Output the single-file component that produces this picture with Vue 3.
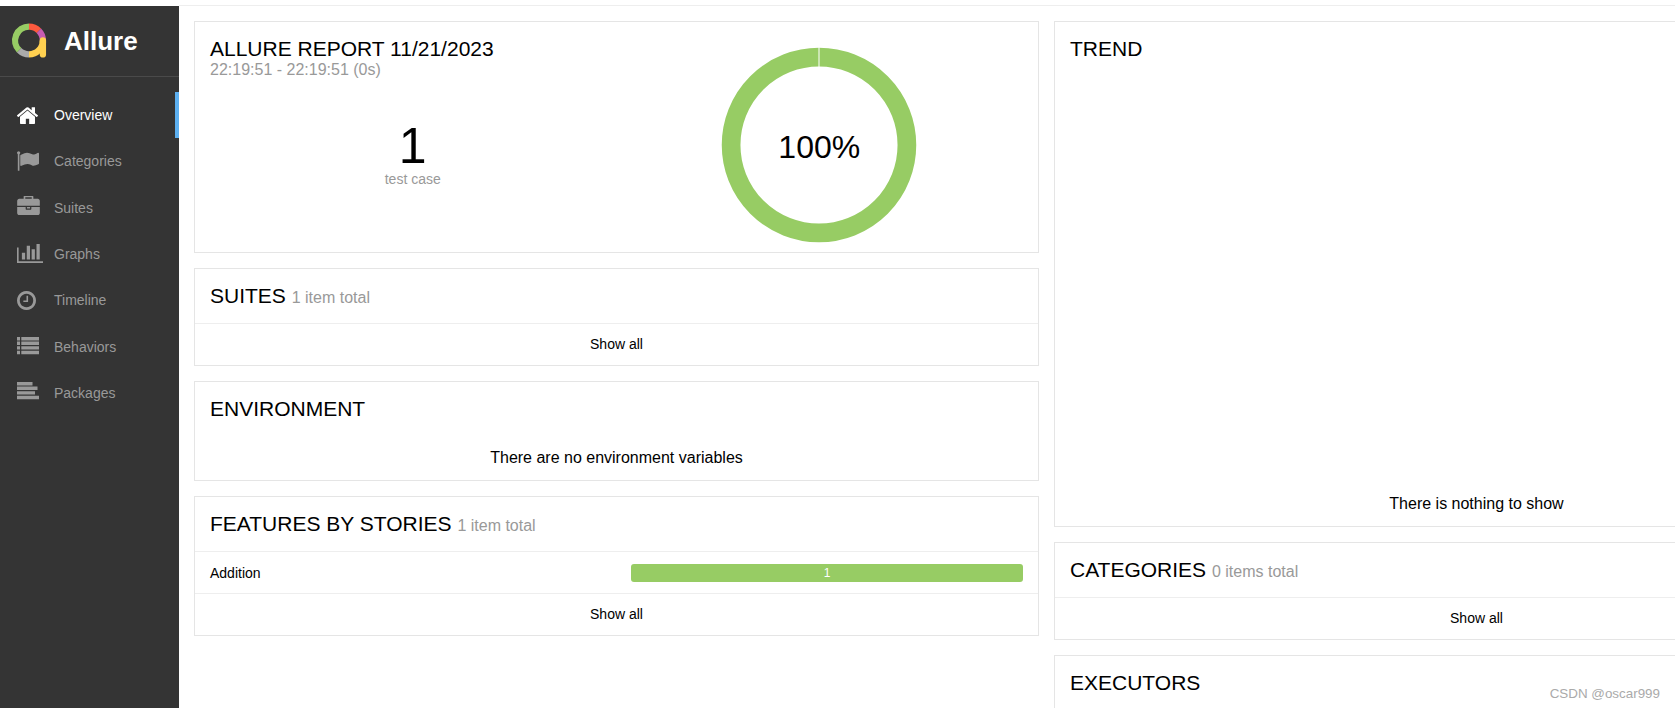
<script setup>
const nav = [
  { name: 'Overview', icon: 'home', active: true },
  { name: 'Categories', icon: 'flag' },
  { name: 'Suites', icon: 'briefcase' },
  { name: 'Graphs', icon: 'chart' },
  { name: 'Timeline', icon: 'clock' },
  { name: 'Behaviors', icon: 'list' },
  { name: 'Packages', icon: 'align' }
]
</script>

<template>
  <div class="page">
    <aside class="side">
      <div class="brand">
        <svg class="logo" width="36" height="36" viewBox="0 0 36 36">
          <g fill="none" stroke-width="6.3">
            <path d="M18 3.6 A13.9 13.900 0 0 0 8.17 27.33" stroke="#97cc64" />
            <path d="M8.17 27.33 A13.9 13.900 0 0 0 18 31.4" stroke="#aaa" />
            <path d="M18 3.6 A13.9 13.900 0 0 1 27.83 7.67" stroke="#fd5a3e" />
            <path d="M27.83 7.67 A13.9 13.900 0 0 1 31.9 17.5" stroke="#c75cb1" />
            <path d="M18 31.4 A13.9 13.900 0 0 0 31.9 17.5" stroke="#ffd050" />
            <path d="M31.9 17.5 V31.400" stroke="#ffd050" stroke-linecap="round" />
            <path d="M31.9 17.5 V20" stroke="#ffd050" />
          </g>
        </svg>
        <span class="brand-name">Allure</span>
      </div>
      <nav class="menu">
        <a v-for="n in nav" :key="n.name" class="item" :class="{ on: n.active }">
          <span class="ico" :class="'ico-' + n.icon">
            <svg v-if="n.icon === 'home'" width="21" height="17" viewBox="90 250 1612 1286"><path fill="currentColor" d="M1472 992v480q0 26-19 45t-45 19h-384v-384h-256v384h-384q-26 0-45-19t-19-45v-480q0-1 .5-3t.5-3l575-474 575 474q1 2 1 6zm223-69l-62 74q-8 9-21 11h-3q-13 0-21-7l-692-577-692 577q-12 8-24 7-13-2-21-11l-62-74q-8-10-7-23.500t11-21.500l719-599q32-26 76-26t76 26l244 204v-195q0-14 9-23t23-9h192q14 0 23 9t9 23v408l219 182q10 8 11 21.500t-7 23.500z" /></svg>
            <svg v-else-if="n.icon === 'flag'" width="22" height="20" viewBox="64 128 1728 1536"><path fill="currentColor" d="M320 256q0 72-64 110v1266q0 13-9.500 22.500t-22.500 9.500h-64q-13 0-22.500-9.500t-9.500-22.500v-1266q-64-38-64-110 0-53 37.500-90.500t90.500-37.500 90.500 37.500 37.500 90.500zm1472 64v763q0 25-12.500 38.500t-39.500 27.500q-215 116-369 116-61 0-123.500-22t-108.500-48-115.500-48-142.500-22q-192 0-464 146-17 9-33 9-26 0-45-19t-19-45v-742q0-32 31-55 21-14 79-43 236-120 421-120 107 0 200 29t219 88q38 19 88 19 54 0 117.500-21t110-47 88-47 54.500-21q26 0 45 19t19 45z" /></svg>
            <svg v-else-if="n.icon === 'briefcase'" width="23" height="19" viewBox="0 32 1792 1504"><path fill="currentColor" d="M640 256h512v-128h-512v128zm1152 640v480q0 66-47 113t-113 47h-1472q-66 0-113-47t-47-113v-480h672v160q0 26 19 45t45 19h320q26 0 45-19t19-45v-160h672zm-768 0v128h-256v-128h256zm768-480v384h-1792v-384q0-66 47-113t113-47h352v-160q0-40 28-68t68-28h576q40 0 68 28t28 68v160h352q66 0 113 47t47 113z" /></svg>
            <svg v-else-if="n.icon === 'chart'" width="26" height="19" viewBox="0 256 2048 1408" preserveAspectRatio="none"><path fill="currentColor" d="M640 896v512h-256v-512h256zm384-512v1024h-256v-1024h256zm1024 1152v128h-2048v-1152h128v1024h1920zm-640-896v768h-256v-768h256zm384-384v1152h-256v-1152h256z" /></svg>
            <svg v-else-if="n.icon === 'clock'" width="19" height="19" viewBox="128 128 1536 1536"><path fill="currentColor" d="M1024 544v448q0 14-9 23t-23 9h-320q-14 0-23-9t-9-23v-64q0-14 9-23t23-9h224v-352q0-14 9-23t23-9h64q14 0 23 9t9 23zm416 352q0-148-73-273t-198-198-273-73-273 73-198 198-73 273 73 273 198 198 273 73 273-73 198-198 73-273zm224 0q0 209-103 385.500t-279.500 279.500-385.500 103-385.500-103-279.500-279.500-103-385.500 103-385.500 279.500-279.500 385.500-103 385.500 103 279.500 279.500 103 385.500z" /></svg>
            <svg v-else-if="n.icon === 'list'" width="22" height="18" viewBox="0 0 22 18"><path fill="currentColor" d="M0 0 H3 V3.400 H0 Z M4.300 0 H22 V3.400 H4.300 Z M0 4.600 H3 V8 H0 Z M4.300 4.600 H22 V8 H4.300 Z M0 9.200 H3 V12.600 H0 Z M4.300 9.200 H22 V12.600 H4.300 Z M0 13.800 H3 V17.200 H0 Z M4.300 13.800 H22 V17.200 H4.300 Z" /></svg>
            <svg v-else width="22" height="18" viewBox="0 0 22 18"><path fill="currentColor" d="M0 0 H15.500 V3.400 H0 Z M0 4.600 H20.500 V8 H0 Z M0 9.200 H18 V12.600 H0 Z M0 13.800 H22 V17.200 H0 Z" /></svg>
          </span>
          <span class="label">{{ n.name }}</span>
        </a>
      </nav>
    </aside>
    <main class="content">
      <div class="col">
        <section class="card summary">
          <div class="summary-left">
            <h2 class="title">ALLURE REPORT 11/21/2023</h2>
            <div class="time">22:19:51 - 22:19:51 (0s)</div>
            <div class="count">
              <div class="num">1</div>
              <div class="cap">test case</div>
            </div>
          </div>
          <div class="summary-right">
            <svg class="donut" width="196" height="196" viewBox="0 0 196 196">
              <circle cx="98" cy="98" r="87.900" fill="none" stroke="#97cc64" stroke-width="18.700" />
              <rect x="97.500" y="0" width="1" height="20" fill="#fff" />
            </svg>
            <span class="pct">100%</span>
          </div>
        </section>
        <section class="card">
          <div class="head"><h2 class="title">SUITES <span class="sub">1 item total</span></h2></div>
          <div class="show">Show all</div>
        </section>
        <section class="card env">
          <div class="head plain"><h2 class="title">ENVIRONMENT</h2></div>
          <div class="empty env-empty">There are no environment variables</div>
        </section>
        <section class="card">
          <div class="head"><h2 class="title">FEATURES BY STORIES <span class="sub">1 item total</span></h2></div>
          <div class="row">
            <span class="row-name">Addition</span>
            <div class="bar">1</div>
          </div>
          <div class="show">Show all</div>
        </section>
      </div>
      <div class="col">
        <section class="card trend">
          <h2 class="title">TREND</h2>
          <div class="empty trend-empty">There is nothing to show</div>
        </section>
        <section class="card">
          <div class="head"><h2 class="title">CATEGORIES <span class="sub">0 items total</span></h2></div>
          <div class="show">Show all</div>
        </section>
        <section class="card">
          <div class="head plain"><h2 class="title">EXECUTORS</h2></div>
        </section>
      </div>
    </main>
    <div class="mark">CSDN @oscar999</div>
  </div>
</template>

<style>
html, body { margin: 0; overflow: hidden; background: #fff; }
</style>

<style scoped>
.page {
  position: relative;
  height: 708px;
  width: 1675px;
  overflow: hidden;
  display: flex;
  font-family: "Liberation Sans", Arial, sans-serif;
  color: #000;
  box-sizing: border-box;
  padding-top: 5px;
}
.side {
  width: 179px;
  flex: none;
  background: #343434;
  margin-top: 1px;
}
.brand {
  height: 70px;
  border-bottom: 1px solid #4a4a4a;
  display: flex;
  align-items: center;
  padding-left: 11px;
  gap: 17px;
}
.logo { flex: none; }
.brand-name { color: #fff; font-weight: 700; font-size: 26px; }
.menu { padding-top: 15px; }
.item {
  display: flex;
  align-items: center;
  height: 46.3px;
  color: #999;
  font-size: 14px;
  box-sizing: border-box;
  border-right: 4px solid transparent;
}
.item.on { color: #fff; border-right-color: #5db0f0; }
.ico { width: 54px; padding-left: 17px; box-sizing: border-box; flex: none; display: flex; }
.ico-flag { margin-top: -1px; }
.ico-briefcase { margin-top: -4px; }
.ico-chart { margin-top: -2px; }
.ico-clock { margin-top: 1px; }
.ico-list { margin-top: -2px; }
.ico-align { margin-top: -4px; }
.content {
  flex: none;
  display: flex;
  gap: 15px;
  padding: 15px 0 0 15px;
  border-top: 1px solid #eee;
  width: 1496px;
  box-sizing: border-box;
}
.col { flex: none; width: 845px; display: flex; flex-direction: column; gap: 15px; }
.card { border: 1px solid #e5e5e5; box-sizing: border-box; background: #fff; flex: none; }
.title { font-size: 21px; font-weight: 400; margin: 0; line-height: 22px; }
.sub { font-size: 16px; color: #999; }
.summary { height: 232px; display: flex; }
.summary-left { width: 50%; padding: 16px 15px; box-sizing: border-box; }
.time { color: #999; font-size: 16px; line-height: 18px; margin-top: 1px; }
.count { text-align: center; margin-top: 43px; padding-left: 14px; }
.num { font-size: 50px; line-height: 48px; }
.cap { font-size: 14px; color: #999; line-height: 18px; }
.summary-right { width: 50%; position: relative; display: flex; align-items: center; justify-content: center; padding: 15px 16px 0 0; box-sizing: border-box; }
.donut { display: block; }
.pct { position: absolute; left: 0; right: 16px; top: 107px; line-height: 36px; text-align: center; font-size: 32px; }
.head { height: 55px; padding: 16px 15px 0; box-sizing: border-box; border-bottom: 1px solid #eee; }
.head.plain { border-bottom: 0; }
.show { height: 41px; line-height: 41px; text-align: center; font-size: 14px; }
.env { height: 100px; }
.empty { text-align: center; font-size: 16px; line-height: 22px; }
.env-empty { padding-top: 10px; }
.row { height: 42px; display: flex; align-items: center; padding: 0 15px; border-bottom: 1px solid #eee; font-size: 14px; box-sizing: border-box; }
.row-name { width: 421px; flex: none; }
.bar { flex: 1; height: 18px; background: #97cc64; border-radius: 3px; color: #fff; font-size: 12px; line-height: 18px; text-align: center; }
.trend { height: 506px; padding: 16px 15px; position: relative; }
.trend-empty { position: absolute; left: 0; right: 0; bottom: 11px; }
.mark { position: absolute; right: 15px; top: 686px; color: #aaa; font-size: 13.4px; }
</style>
